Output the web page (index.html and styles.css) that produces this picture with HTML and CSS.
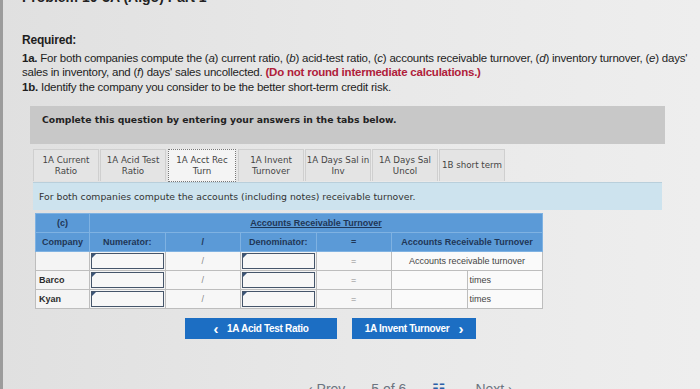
FILE: index.html
```html
<html>

<head>
    <title>Problem 10-3A (Algo) Part 1</title>
    <link rel="stylesheet" href="styles.css">
</head>

<body>
    <div class="page">
        <h2 class="title">Problem 10-3A (Algo) Part 1</h2>

        <div class="required">
            <p class="req-head">Required:</p>
            <p><b>1a.</b> For both companies compute the (<i>a</i>) current ratio, (<i>b</i>) acid-test ratio, (<i>c</i>) accounts receivable turnover, (<i>d</i>) inventory turnover, (<i>e</i>) days'<br>
                sales in inventory, and (<i>f</i>) days' sales uncollected. <span class="warn">(Do not round intermediate calculations.)</span></p>
            <p><b>1b.</b> Identify the company you consider to be the better short-term credit risk.</p>
        </div>

        <div class="main">
            <div class="complete">Complete this question by entering your answers in the tabs below.</div>

            <div class="tabs">
                <div class="tab">1A Current<br>Ratio</div>
                <div class="tab">1A Acid Test<br>Ratio</div>
                <div class="tab active">1A Acct Rec<br>Turn</div>
                <div class="tab">1A Invent<br>Turnover</div>
                <div class="tab">1A Days Sal in<br>Inv</div>
                <div class="tab">1A Days Sal<br>Uncol</div>
                <div class="tab">1B short term</div>
            </div>

            <div class="info">For both companies compute the accounts (including notes) receivable turnover.</div>

            <table class="ratio">
                <tr class="h1">
                    <th class="c-co">(c)</th>
                    <th colspan="6"><u>Accounts Receivable Turnover</u></th>
                </tr>
                <tr class="h2">
                    <th class="c-co">Company</th>
                    <th class="c-num">Numerator:</th>
                    <th class="c-op">/</th>
                    <th class="c-den">Denominator:</th>
                    <th class="c-op">=</th>
                    <th colspan="2">Accounts Receivable Turnover</th>
                </tr>
                <tr>
                    <td class="co"></td>
                    <td class="inp"><div class="box"></div></td>
                    <td class="op">/</td>
                    <td class="inp"><div class="box"></div></td>
                    <td class="op">=</td>
                    <td colspan="2" class="label">Accounts receivable turnover</td>
                </tr>
                <tr>
                    <td class="co">Barco</td>
                    <td class="inp"><div class="box"></div></td>
                    <td class="op">/</td>
                    <td class="inp"><div class="box"></div></td>
                    <td class="op">=</td>
                    <td class="res"></td>
                    <td class="unit">times</td>
                </tr>
                <tr>
                    <td class="co">Kyan</td>
                    <td class="inp"><div class="box"></div></td>
                    <td class="op">/</td>
                    <td class="inp"><div class="box"></div></td>
                    <td class="op">=</td>
                    <td class="res"></td>
                    <td class="unit">times</td>
                </tr>
            </table>

            <div class="navbtns">
                <button class="btn prev"><span class="chev">&lsaquo;</span>1A Acid Test Ratio</button>
                <button class="btn next">1A Invent Turnover<span class="chev right">&rsaquo;</span></button>
            </div>
        </div>

        <div class="pager">
            <span class="pg prevpg">&lsaquo; Prev</span>
            <span class="pg">5 of 6</span>
            <span class="grid">&#x2637;</span>
            <span class="pg">Next &rsaquo;</span>
        </div>
    </div>
</body>

</html>
```

FILE: styles.css
```css
body {
    margin: 0;
    height: 389px;
    overflow: hidden;
    background: linear-gradient(90deg, #e0e0e0 0%, #e8e8e8 50%, #eeeeee 100%);
    border-left: 3px solid #9c9c9c;
    font-family: "Liberation Sans", Arial, sans-serif;
    color: #1e1e1e;
}

.page {
    padding-left: 19px;
}

.title {
    margin: -12px 0 0 0;
    font-size: 14px;
    line-height: 18px;
    color: #222;
}

.required {
    margin-top: 27px;
    font-size: 11.5px;
    line-height: 14.5px;
    letter-spacing: -0.22px;
}

.required p {
    margin: 0;
}

.req-head {
    font-weight: bold;
    font-size: 12px;
    margin-bottom: 3px !important;
}

.warn {
    color: #b0203a;
    font-weight: bold;
}

.main {
    margin: 12px 0 0 8px;
    width: 635px;
}

.complete {
    background: #c8c8c8;
    height: 38px;
    padding-left: 12px;
    font-family: "DejaVu Sans", Verdana, sans-serif;
    font-weight: bold;
    font-size: 9.25px;
    line-height: 28px;
    color: #222;
}

.tabs {
    display: flex;
    margin: 5px 0 0 3px;
    font-family: "DejaVu Sans", Verdana, sans-serif;
    font-size: 8.7px;
    line-height: 11px;
    color: #444;
}

.tab {
    width: 64px;
    height: 31px;
    margin-right: 1px;
    border: 1px solid #cfcfcf;
    border-bottom: none;
    background: #e4e4e4;
    display: flex;
    align-items: center;
    justify-content: center;
    text-align: center;
    white-space: nowrap;
}

.tab.active {
    width: 66px;
    background: #f4f4f4;
    border: 1px dotted #777;
    margin: 0 2px 0 1px;
}

.info {
    margin-left: 3px;
    width: 623px;
    height: 27px;
    padding-left: 6px;
    background: #cde3ee;
    border-top: 1px solid #b9cfdb;
    font-family: "DejaVu Sans", Verdana, sans-serif;
    font-size: 9.3px;
    line-height: 27px;
    color: #333;
}

.ratio {
    margin: 3px 0 0 5px;
    width: 508px;
    border-collapse: collapse;
    font-size: 9px;
    table-layout: fixed;
}

.ratio th {
    background: #5b9ad7;
    color: #1f3656;
    font-weight: bold;
    border: 1px solid #7fb2e2;
    padding: 0;
}

.ratio .h1 th {
    height: 19px;
}

.ratio .h2 th {
    height: 19px;
}

.c-co {
    width: 53px;
}

.c-num {
    width: 102px;
}

.c-op {
    width: 15px;
}

.c-den {
    width: 168px;
}

.ratio td {
    border: 1px solid #bdbdbd;
    background: #f4f4f4;
    height: 16px;
    padding: 0;
    color: #444;
}

.ratio tr:nth-child(5) td {
    height: 17px;
}

.ratio td.co {
    font-weight: bold;
    padding-left: 3px;
    color: #2c2c2c;
}

.ratio td.op {
    text-align: center;
    color: #888;
    background: #f7f7f7;
}

.ratio td.inp {
    padding: 1px;
    background: #f4f4f4;
}

.box {
    position: relative;
    height: 14px;
    border: 1.5px solid #45556a;
    background: #f7f7f7;
}

.box::before {
    content: "";
    position: absolute;
    left: 0;
    top: 0;
    border-top: 4px solid #3b5578;
    border-right: 4px solid transparent;
}

.ratio td.label {
    text-align: center;
    background: #fafafa;
}

.ratio td.res {
    width: 68px;
    background: #fafafa;
}

.ratio td.unit {
    padding-left: 2px;
    background: #fafafa;
}

.navbtns {
    display: flex;
    margin: 9px 0 0 155px;
    gap: 15px;
}

.btn {
    height: 21px;
    border: none;
    background: #1c6ec3;
    color: #fff;
    font-family: "Liberation Sans", Arial, sans-serif;
    font-weight: bold;
    font-size: 10px;
    letter-spacing: -0.3px;
    display: flex;
    align-items: center;
    justify-content: center;
}

.chev {
    font-size: 15px;
    margin-right: 9px;
    line-height: 15px;
}

.chev.right {
    margin: 0 0 0 9px;
}

.btn.prev {
    width: 152px;
}

.btn.next {
    width: 124px;
}

.pager {
    display: flex;
    margin: 42px 0 0 286px;
    font-size: 14px;
    color: #6c7480;
    line-height: 16px;
}

.pg {
    margin-right: 26px;
}

.grid {
    color: #2b5fa8;
    font-size: 15px;
    margin-right: 30px;
}
```
